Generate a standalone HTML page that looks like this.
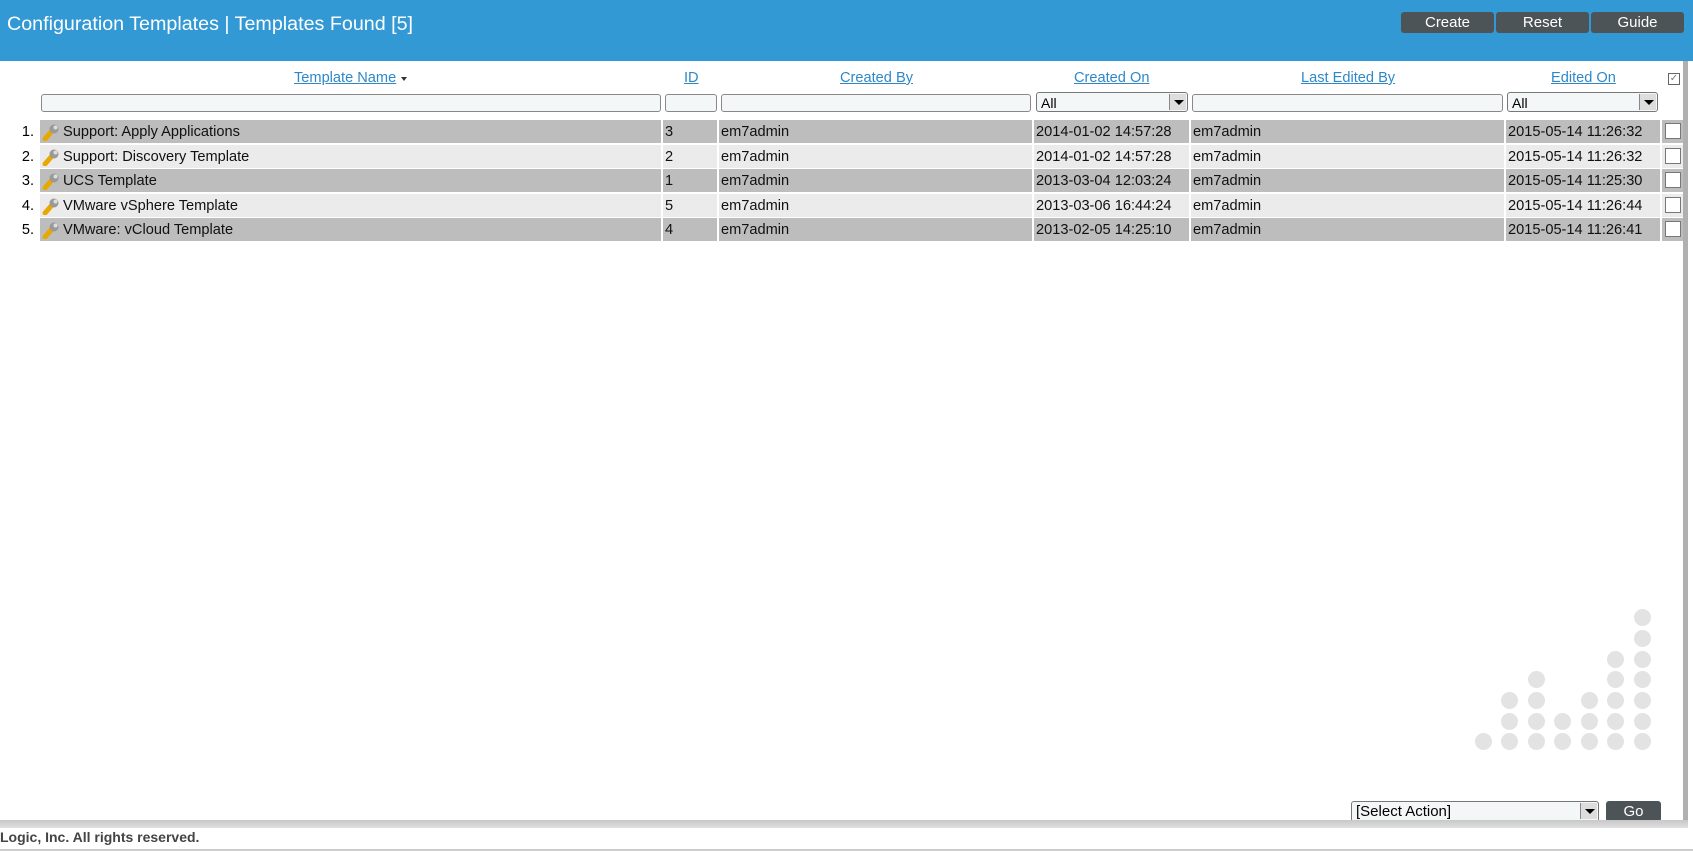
<!DOCTYPE html>
<html><head><style>
*{box-sizing:border-box;margin:0;padding:0}
body{width:1693px;height:851px;position:relative;overflow:hidden;background:#fff;font-family:"Liberation Sans",Arial,sans-serif}
.hdr{position:absolute;left:0;top:0;width:1693px;height:61px;background:#3399d4}
.title{position:absolute;left:7px;top:13px;color:#fff;font-size:19.7px}
.btn{position:absolute;top:12px;height:21px;background:#4d5457;color:#fff;font-size:15px;text-align:center;line-height:22px;border-radius:3px}
.sb{position:absolute;left:1683px;top:61px;width:5px;height:759px;background:#b0b0b0}
.ch{position:absolute;top:70px;font-size:14.6px;color:#2e88c8;text-decoration:underline}
.f{position:absolute;top:94px;height:18px;border:1px solid #888;border-radius:3px;background:#f4f7f8}
.sel{position:absolute;height:20px;border:1px solid #777;border-radius:3px;background:#f4f7f8;font-size:14px;padding-left:4px;line-height:20px}
.sel i{position:absolute;right:1px;top:1px;width:17px;height:16px;background:#ddd;border-left:1px solid #888}
.sel i:after{content:"";position:absolute;left:4px;top:6px;border-left:5px solid transparent;border-right:5px solid transparent;border-top:5px solid #000}
.c{position:absolute;height:23px;font-size:14.6px;line-height:25px;padding-left:2px;color:#111;white-space:nowrap}
.n{position:absolute;width:34px;text-align:right;font-size:14.6px;line-height:25px}
.cb{position:absolute;width:16px;height:16px;background:#fff;border:1px solid #777}
.dot{position:absolute;width:17px;height:17px;border-radius:50%;background:#e3e3e3}
</style></head><body>
<div class="hdr"><div class="title">Configuration Templates | Templates Found [5]</div>
<div class="btn" style="left:1401px;width:93px">Create</div>
<div class="btn" style="left:1496px;width:93px">Reset</div>
<div class="btn" style="left:1591px;width:93px">Guide</div></div>
<div class="sb"></div>
<div class="ch" style="left:294px">Template Name</div><div style="position:absolute;left:401px;top:77px;border-left:3px solid transparent;border-right:3px solid transparent;border-top:4px solid #333"></div>
<div class="ch" style="left:684px">ID</div>
<div class="ch" style="left:840px">Created By</div>
<div class="ch" style="left:1074px">Created On</div>
<div class="ch" style="left:1301px">Last Edited By</div>
<div class="ch" style="left:1551px">Edited On</div>
<div style="position:absolute;left:1668px;top:73px;width:12px;height:12px;border:1px solid #666;font-size:10px;line-height:10px;color:#777;text-align:center">✓</div>
<div class="f" style="left:41px;width:620px"></div>
<div class="f" style="left:665px;width:52px"></div>
<div class="f" style="left:721px;width:310px"></div>
<div class="sel" style="left:1036px;top:92px;width:152px">All<i></i></div>
<div class="f" style="left:1192px;width:311px"></div>
<div class="sel" style="left:1507px;top:92px;width:151px">All<i></i></div>
<div id="rows"></div>
<script>
var d=[["Support: Apply Applications","3","2014-01-02 14:57:28","2015-05-14 11:26:32"],["Support: Discovery Template","2","2014-01-02 14:57:28","2015-05-14 11:26:32"],["UCS Template","1","2013-03-04 12:03:24","2015-05-14 11:25:30"],["VMware vSphere Template","5","2013-03-06 16:44:24","2015-05-14 11:26:44"],["VMware: vCloud Template","4","2013-02-05 14:25:10","2015-05-14 11:26:41"]];
var tops=[120,145,169,194,218],h="";
var ic='<svg width="18" height="18" viewBox="0 0 18 18" style="position:absolute;left:2px;top:3px"><path d="M3 16 L10 8" stroke="#e8a800" stroke-width="5" stroke-linecap="round"/><circle cx="12" cy="6" r="4.5" fill="#999"/><circle cx="13.5" cy="4.5" r="2" fill="#ddd"/></svg>';
d.forEach(function(r,i){var t=tops[i],bg=i%2?"#ebebeb":"#bdbdbd";
h+='<div class="n" style="left:0;top:'+t+'px">'+(i+1)+'.</div>';
h+='<div class="c" style="left:40px;width:621px;top:'+t+'px;background:'+bg+';padding-left:23px">'+ic+r[0]+'</div>';
h+='<div class="c" style="left:663px;width:54px;top:'+t+'px;background:'+bg+'">'+r[1]+'</div>';
h+='<div class="c" style="left:719px;width:313px;top:'+t+'px;background:'+bg+'">em7admin</div>';
h+='<div class="c" style="left:1034px;width:155px;top:'+t+'px;background:'+bg+'">'+r[2]+'</div>';
h+='<div class="c" style="left:1191px;width:313px;top:'+t+'px;background:'+bg+'">em7admin</div>';
h+='<div class="c" style="left:1506px;width:154px;top:'+t+'px;background:'+bg+'">'+r[3]+'</div>';
h+='<div class="c" style="left:1662px;width:21px;top:'+t+'px;background:'+bg+'"></div>';
h+='<div class="cb" style="left:1665px;top:'+(t+3)+'px"></div>';});
var xs=[1483,1509,1536,1562,1589,1615,1642],cnt=[1,3,4,2,3,5,7],ys=[741,721,700,679,659,638,617];
xs.forEach(function(x,i){for(var k=0;k<cnt[i];k++)h+='<div class="dot" style="left:'+(x-8)+'px;top:'+(ys[k]-8)+'px"></div>';});
document.getElementById("rows").innerHTML=h;
</script>
<div class="sel" style="left:1351px;top:801px;width:248px;height:21px;font-size:15px">[Select Action]<i></i></div>
<div class="btn" style="left:1606px;top:801px;width:55px;height:21px">Go</div>
<div style="position:absolute;left:0;top:820px;width:1688px;height:8px;background:linear-gradient(#c8c8c8,#e0e0e0)"></div>
<div style="position:absolute;left:0;top:829px;font-size:14px;font-weight:bold;color:#444">Logic, Inc. All rights reserved.</div>
<div style="position:absolute;left:0;top:849px;width:1693px;height:2px;background:#ccc"></div>
</body></html>
